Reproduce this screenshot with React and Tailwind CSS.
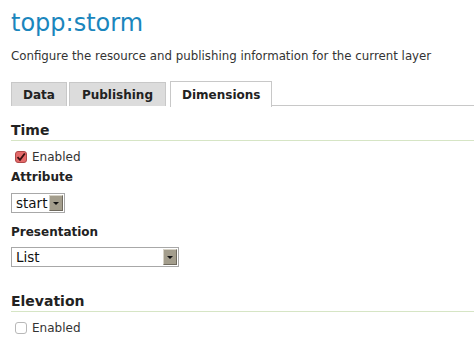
import React from "react";

function Select({ value, width }) {
  return (
    <div className={`flex items-stretch h-[20px] border border-[#a8a8a8] bg-white ${width}`}>
      <div className="flex-1 pl-[4px] text-[13.5px] leading-[18px] text-[#111]">{value}</div>
      <div className="w-[14px] m-[1px] bg-[#a39d8c] border border-t-[#d6d2c6] border-l-[#d6d2c6] border-b-[#6f6a5e] border-r-[#6f6a5e] flex items-center justify-center">
        <div className="w-0 h-0 border-l-[3px] border-r-[3px] border-t-[3px] border-l-transparent border-r-transparent border-t-[#111]" />
      </div>
    </div>
  );
}

function Check({ checked }) {
  return (
    <div className="flex items-center gap-[5px] pl-[4px]">
      {checked ? (
        <div className="w-[12px] h-[12px] rounded-[3px] bg-[#e46a6a] border border-[#b04848] flex items-center justify-center">
          <svg width="10" height="10" viewBox="0 0 10 10">
            <path d="M1.5 5.2 L4 7.8 L8.8 1.5" stroke="#3a1010" strokeWidth="1.8" fill="none" />
          </svg>
        </div>
      ) : (
        <div className="w-[12px] h-[12px] rounded-[3px] bg-white border border-[#b8b8b8]" />
      )}
      <span className="text-[12px] text-[#333]">Enabled</span>
    </div>
  );
}

export default function App() {
  return (
    <div className="w-[474px] h-[353px] bg-white overflow-hidden pl-[11px] font-['DejaVu_Sans',sans-serif]">
      <h1 className="text-[24px] leading-[28px] text-[#1a86bd] pt-[9px]">topp:storm</h1>
      <p className="text-[11.8px] text-[#333] mt-[11px] leading-[16px]">
        Configure the resource and publishing information for the current layer
      </p>
      <div className="flex items-end mt-[17px] relative">
        <div className="h-[24px] px-[11px] bg-[#dcdcdc] border border-[#c8c8c8] border-b-0 text-[12px] font-bold text-[#222] flex items-center mr-[2px]">Data</div>
        <div className="h-[24px] px-[12px] bg-[#dcdcdc] border border-[#c8c8c8] border-b-0 text-[12px] font-bold text-[#222] flex items-center mr-[4px]">Publishing</div>
        <div className="h-[26px] px-[11px] bg-white border border-[#c8c8c8] border-b-0 text-[12px] font-bold text-[#222] flex items-center relative z-10 -mb-[1px]">Dimensions</div>
        <div className="flex-1 border-b border-[#c8c8c8]" />
      </div>
      <div className="mt-[15px] border-b border-[#d6e5c5] pb-[1px]">
        <h2 className="text-[14px] font-bold text-[#222] leading-[18px]">Time</h2>
      </div>
      <div className="mt-[7px]">
        <Check checked />
      </div>
      <div className="text-[12px] font-bold text-[#222] mt-[2px]">Attribute</div>
      <div className="mt-[7px]">
        <Select value="start" width="w-[54px]" />
      </div>
      <div className="text-[12px] font-bold text-[#222] mt-[10px]">Presentation</div>
      <div className="mt-[6px]">
        <Select value="List" width="w-[168px]" />
      </div>
      <div className="mt-[25px] border-b border-[#d6e5c5] pb-[1px]">
        <h2 className="text-[14px] font-bold text-[#222] leading-[18px]">Elevation</h2>
      </div>
      <div className="mt-[7px]">
        <Check />
      </div>
    </div>
  );
}
